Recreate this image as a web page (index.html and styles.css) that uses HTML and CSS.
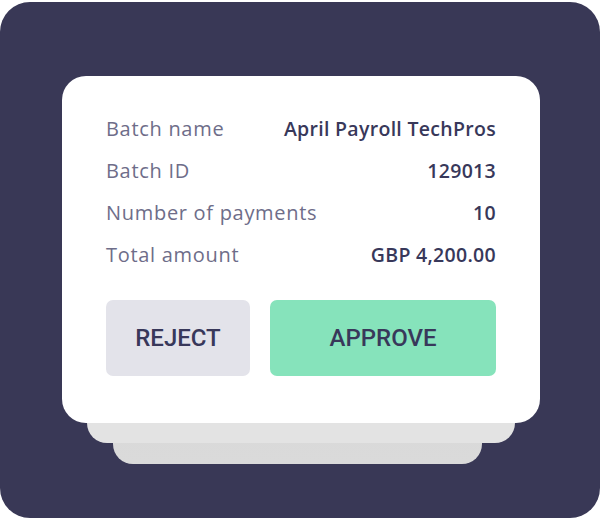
FILE: index.html
```html
<!DOCTYPE html>
<html>
<head>
<meta charset="utf-8">
<link rel="stylesheet" href="styles.css">
</head>
<body>
<div class="frame">
  <div class="stack">
    <div class="layer layer-back"></div>
    <div class="layer layer-mid"></div>
    <div class="card">
      <div class="rows">
        <div class="row"><span class="label">Batch name</span><span class="value">April Payroll TechPros</span></div>
        <div class="row"><span class="label">Batch ID</span><span class="value">129013</span></div>
        <div class="row"><span class="label">Number of payments</span><span class="value">10</span></div>
        <div class="row"><span class="label">Total amount</span><span class="value">GBP 4,200.00</span></div>
      </div>
      <div class="actions">
        <button class="btn btn-reject">REJECT</button>
        <button class="btn btn-approve">APPROVE</button>
      </div>
    </div>
  </div>
</div>
</body>
</html>
```

FILE: styles.css
```css
html, body {
  margin: 0;
  padding: 0;
  background: #ffffff;
}
.frame {
  width: 600px;
  height: 516px;
  margin-top: 2px;
  background: #393856;
  border-radius: 30px;
  padding-top: 74px;
  box-sizing: border-box;
}
.stack {
  position: relative;
  width: 478px;
  margin-left: 62px;
}
.layer {
  position: absolute;
  border-radius: 20px;
}
.layer-mid {
  left: 25px;
  right: 25px;
  top: 40px;
  bottom: -20px;
  background: #e3e3e3;
}
.layer-back {
  left: 51px;
  right: 58px;
  top: 60px;
  bottom: -41px;
  background: linear-gradient(#d2d2d2, #dadada);
}
.card {
  position: relative;
  background: #ffffff;
  border-radius: 24px;
  padding: 31px 44px 47px 44px;
  font-family: "Open Sans", sans-serif;
}
.rows {
  display: flex;
  flex-direction: column;
}
.row {
  display: flex;
  justify-content: space-between;
  align-items: center;
  height: 42px;
  font-size: 20px;
}
.label {
  color: #6e6d89;
  letter-spacing: 0.7px;
}
.value {
  color: #38385a;
  font-weight: 600;
  font-size: 19.5px;
  letter-spacing: 0.3px;
}
.actions {
  display: flex;
  gap: 20px;
  margin-top: 25px;
}
.btn {
  height: 76px;
  border: none;
  border-radius: 7px;
  font-family: Roboto, sans-serif;
  font-weight: 500;
  font-size: 24px;
  color: #38385a;
  padding: 0;
}
.btn-reject {
  width: 144px;
  background: #e3e3ea;
}
.btn-approve {
  flex: 1;
  background: #86e3bb;
}
```
